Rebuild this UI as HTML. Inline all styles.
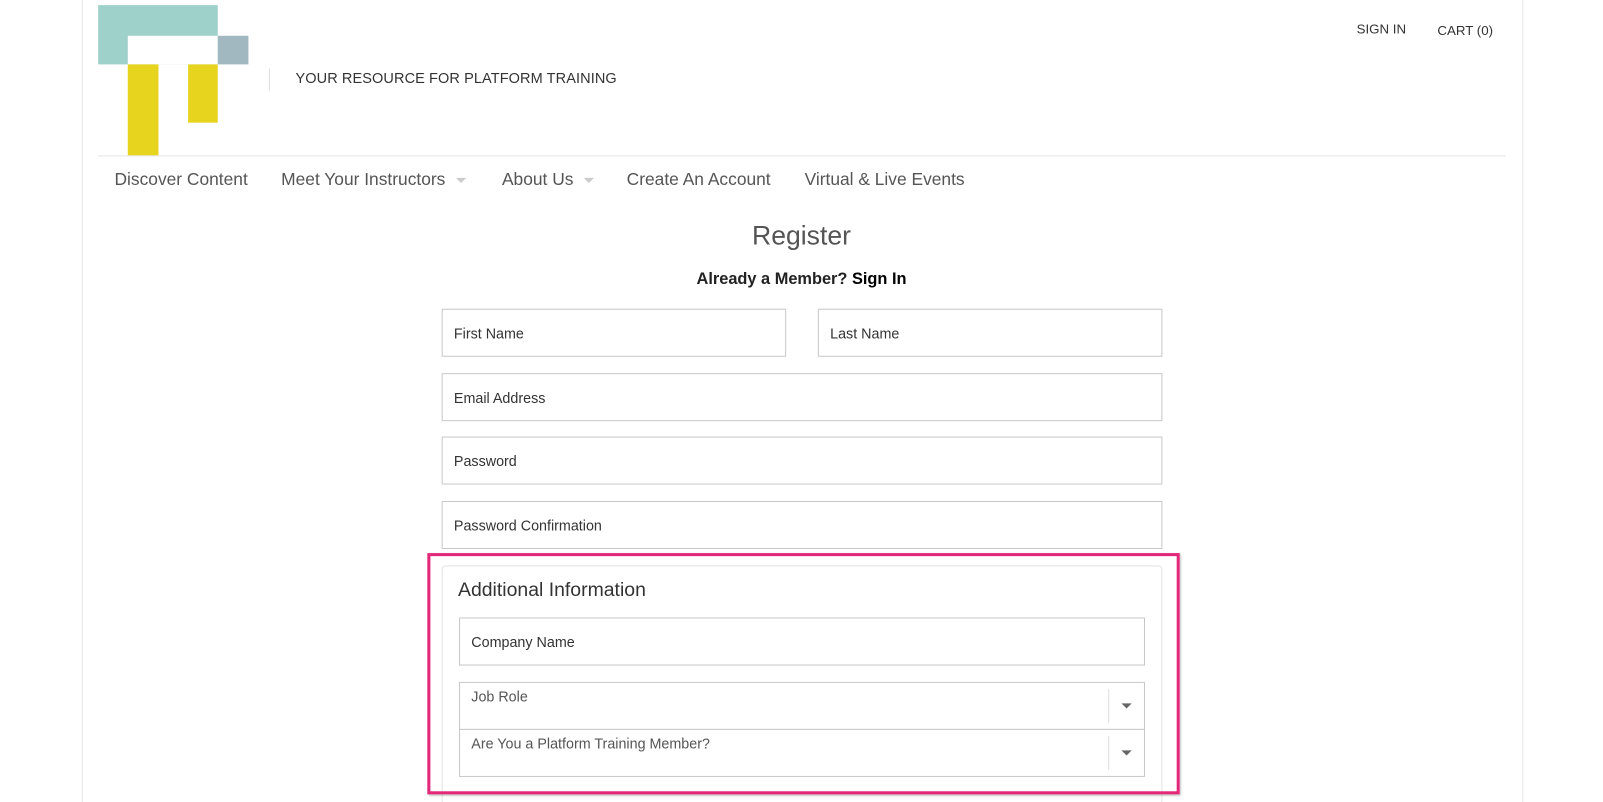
<!DOCTYPE html>
<html><head><meta charset="utf-8"><style>
*{box-sizing:border-box;margin:0;padding:0}
html,body{width:1603px;height:802px;overflow:hidden;background:#fff}
#w{width:1568px;height:785px;position:relative;transform:scale(1.02232);transform-origin:0 0;font-family:"Liberation Sans",sans-serif;color:#444}
.a{position:absolute}
.inp{position:absolute;border:1px solid #c8c8c8;background:#fff;font-size:14px;color:#333;padding-left:11px;display:flex;align-items:center}
.nav{position:absolute;top:166px;font-size:17px;color:#555}
.car{display:inline-block;width:0;height:0;border-left:5px solid transparent;border-right:5px solid transparent;border-top:5px solid #ccc;margin-left:10px;vertical-align:middle}
.sel{position:absolute;border:1px solid #c8c8c8;background:#fff;font-size:14px;color:#555;padding:5px 11px}
.sel .d{position:absolute;right:34px;top:6px;bottom:6px;border-left:1px solid #ddd}
.sel .t{position:absolute;right:12px;top:20px;width:0;height:0;border-left:5px solid transparent;border-right:5px solid transparent;border-top:5px solid #666}
</style></head><body><div id="w">
<div class="a" style="left:80px;top:0;width:1px;height:802px;background:#e6e6e6"></div>
<div class="a" style="left:1489px;top:0;width:1px;height:802px;background:#e6e6e6"></div>
<div class="a" style="left:96px;top:5px;width:117px;height:58px;background:#9fd1cb"></div>
<div class="a" style="left:125px;top:35px;width:88px;height:28px;background:#fff"></div>
<div class="a" style="left:213px;top:35px;width:30px;height:28px;background:#a2b8c1"></div>
<div class="a" style="left:125px;top:63px;width:30px;height:89px;background:#e6d41e"></div>
<div class="a" style="left:184px;top:63px;width:29px;height:57px;background:#e6d41e"></div>
<div class="a" style="left:263px;top:67px;width:1px;height:22px;background:#ddd"></div>
<div class="a" style="left:289px;top:69px;font-size:14.2px;color:#333;letter-spacing:.1px">YOUR RESOURCE FOR PLATFORM TRAINING</div>
<div class="a" style="left:1327px;top:21px;font-size:13px;color:#333">SIGN IN</div>
<div class="a" style="left:1406px;top:22px;font-size:13px;color:#333">CART (0)</div>
<div class="a" style="left:96px;top:152px;width:1377px;height:1px;background:#e6e6e6"></div>
<div class="nav" style="left:112px">Discover Content</div>
<div class="nav" style="left:275px">Meet Your Instructors<span class="car"></span></div>
<div class="nav" style="left:491px">About Us<span class="car"></span></div>
<div class="nav" style="left:613px">Create An Account</div>
<div class="nav" style="left:787px">Virtual &amp; Live Events</div>
<div class="a" style="left:0;width:1568px;top:215px;text-align:center;font-size:26px;color:#555">Register</div>
<div class="a" style="left:0;width:1568px;top:265px;text-align:center;font-size:16px;color:#222;font-weight:bold">Already a Member? <span style="color:#000">Sign In</span></div>
<div class="inp" style="left:432px;top:302px;width:337px;height:47px">First Name</div>
<div class="inp" style="left:800px;top:302px;width:337px;height:47px">Last Name</div>
<div class="inp" style="left:432px;top:365px;width:705px;height:47px">Email Address</div>
<div class="inp" style="left:432px;top:427px;width:705px;height:47px">Password</div>
<div class="inp" style="left:432px;top:490px;width:705px;height:47px">Password Confirmation</div>
<div class="a" style="left:432px;top:553px;width:705px;height:240px;border:1px solid #e4e4e4;border-radius:4px"></div>
<div class="a" style="left:418px;top:541px;width:736px;height:236px;border:3px solid #e3287a;box-shadow:1px 1px 2px rgba(0,0,0,.3)"></div>
<div class="a" style="left:448px;top:567px;font-size:19px;color:#333">Additional Information</div>
<div class="inp" style="left:449px;top:604px;width:671px;height:47px">Company Name</div>
<div class="sel" style="left:449px;top:667px;width:671px;height:47px">Job Role<div class="d"></div><div class="t"></div></div>
<div class="sel" style="left:449px;top:713px;width:671px;height:47px">Are You a Platform Training Member?<div class="d"></div><div class="t"></div></div>
</div></body></html>
